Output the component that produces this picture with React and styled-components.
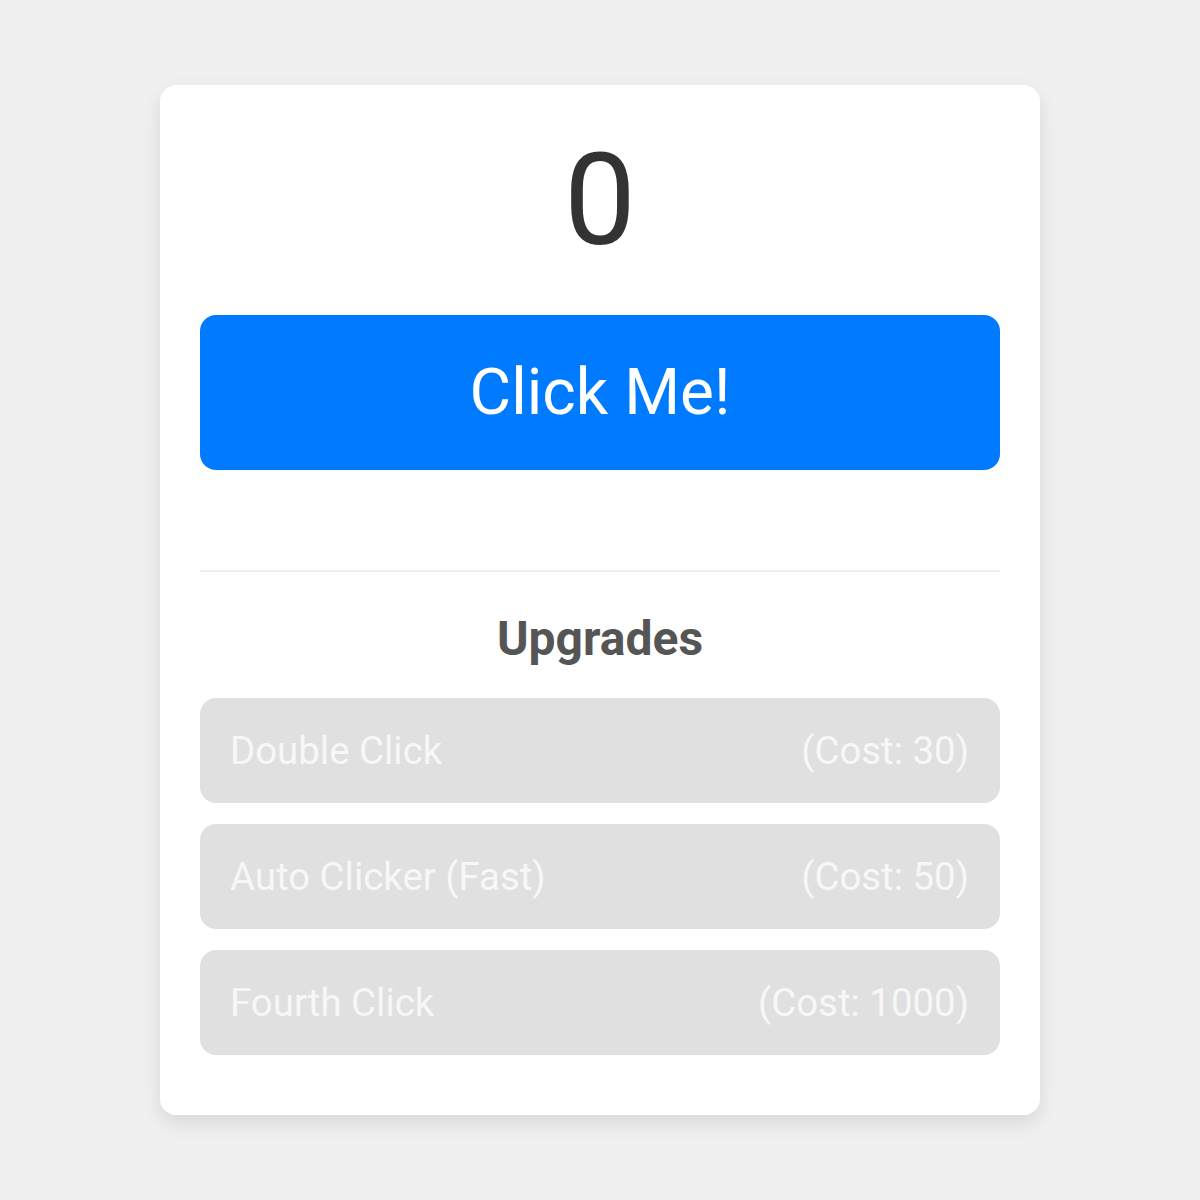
import React from "react";
import styled, { createGlobalStyle } from "styled-components";

const Global = createGlobalStyle`
  html, body { margin: 0; padding: 0; }
  body {
    background: #f0f0f0;
    font-family: Roboto, "Liberation Sans", Arial, sans-serif;
  }
`;

const Page = styled.div`
  min-height: 1200px;
  display: flex;
  align-items: center;
  justify-content: center;
`;

const Card = styled.div`
  width: 880px;
  box-sizing: border-box;
  background: #ffffff;
  border-radius: 16px;
  box-shadow: 0 8px 20px rgba(0, 0, 0, 0.1);
  padding: 40px 40px 60px;
  display: flex;
  flex-direction: column;
`;

const Counter = styled.div`
  font-size: 128px;
  line-height: 150px;
  color: #333333;
  text-align: center;
`;

const ClickButton = styled.button`
  margin-top: 40px;
  border: none;
  background: #007bff;
  color: #ffffff;
  font-family: inherit;
  font-size: 64px;
  line-height: 75px;
  padding: 40px;
  border-radius: 16px;
  cursor: pointer;
`;

const UpgradeSection = styled.section`
  margin-top: 100px;
  border-top: 2px solid #eeeeee;
  padding-top: 39px;
  display: flex;
  flex-direction: column;
  gap: 21px;
`;

const Heading = styled.h3`
  margin: 0 0 10px;
  font-size: 48px;
  line-height: 56px;
  font-weight: 700;
  color: #555555;
  text-align: center;
`;

const UpgradeButton = styled.button`
  display: flex;
  justify-content: space-between;
  align-items: center;
  border: none;
  background: #e0e0e0;
  color: #f7f7f7;
  font-family: inherit;
  font-size: 38.4px;
  line-height: 45px;
  padding: 30px 31px 30px 30px;
  border-radius: 16px;
  text-align: left;
`;

const upgrades = [
  { name: "Double Click", cost: 30 },
  { name: "Auto Clicker (Fast)", cost: 50 },
  { name: "Fourth Click", cost: 1000 },
];

export default function App() {
  return (
    <>
      <Global />
      <Page>
        <Card>
          <Counter>0</Counter>
          <ClickButton>Click Me!</ClickButton>
          <UpgradeSection>
            <Heading>Upgrades</Heading>
            {upgrades.map((u) => (
              <UpgradeButton key={u.name} disabled>
                <span>{u.name}</span>
                <span>(Cost: {u.cost})</span>
              </UpgradeButton>
            ))}
          </UpgradeSection>
        </Card>
      </Page>
    </>
  );
}
